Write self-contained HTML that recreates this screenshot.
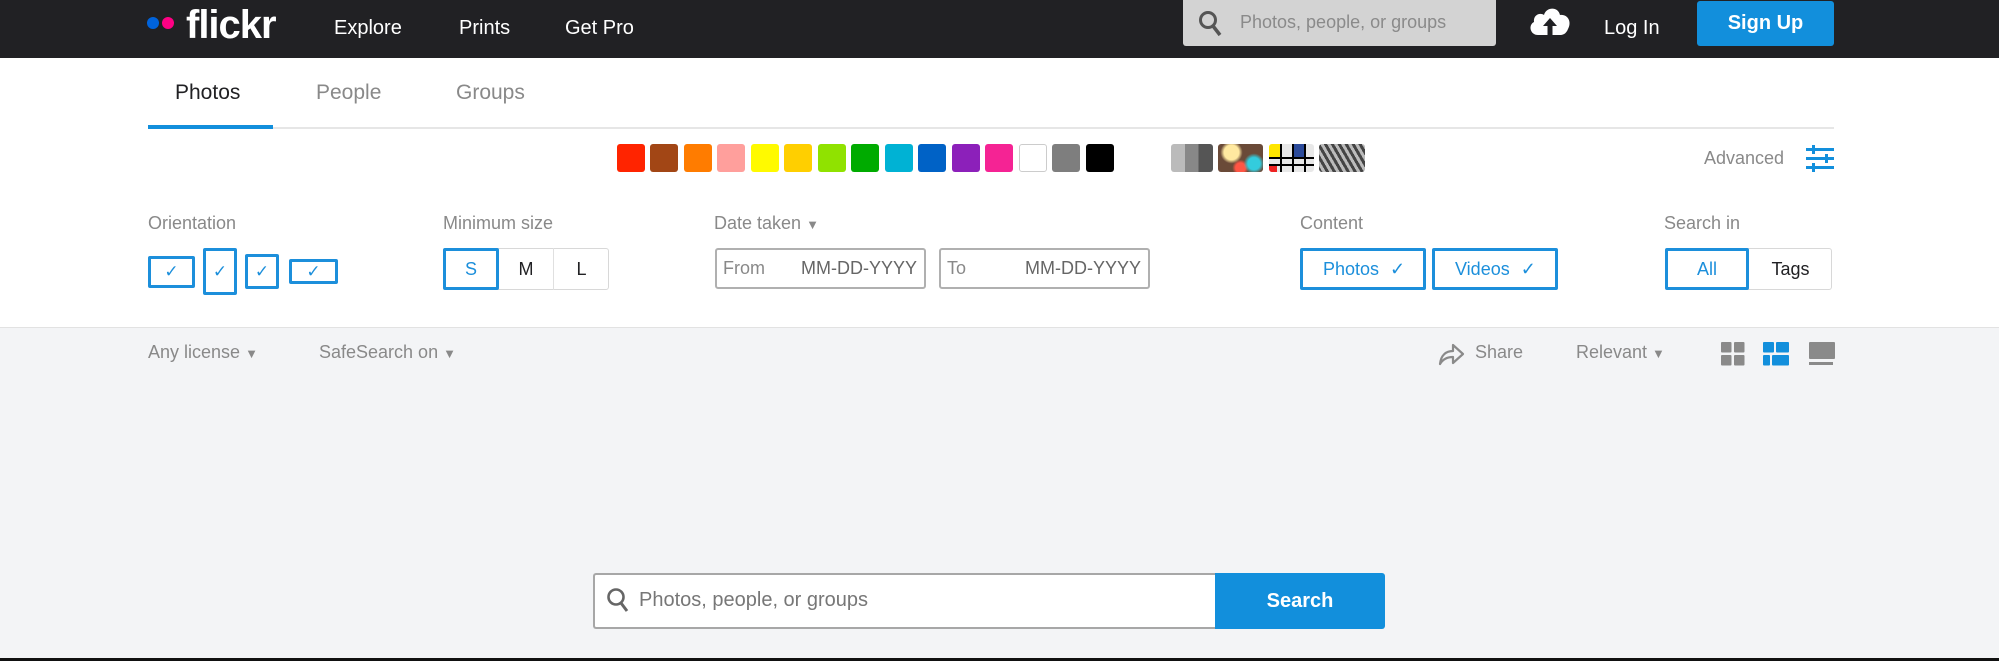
<!DOCTYPE html>
<html><head><meta charset="utf-8"><style>
*{margin:0;padding:0;box-sizing:border-box}
body{width:1999px;height:661px;overflow:hidden;background:#f3f4f6;font-family:"Liberation Sans",sans-serif;position:relative}
.a{position:absolute}
.nav{left:0;top:0;width:1999px;height:58px;background:#212124}
.white{left:0;top:58px;width:1999px;height:270px;background:#fff;border-bottom:1px solid #e2e2e2}
.nl{color:#fff;font-size:20px;top:17px}
.sw{top:144px;width:28px;height:28px;border-radius:3px}
.lbl{color:#898989;font-size:18px;top:213px}
.bx{border:3px solid #1c8fdb;border-radius:2px}
.ck{color:#1c8fdb;font-size:17px;display:flex;align-items:center;justify-content:center}
.seg{border:1px solid #d8d8d8;font-size:18px;display:flex;align-items:center;justify-content:center;color:#212124}
.gray{color:#898989;font-size:18px;top:342px}
</style></head><body>
<div class="a nav"></div>
<div class="a" style="left:147px;top:17px;width:12px;height:12px;border-radius:50%;background:#0063dc"></div>
<div class="a" style="left:162px;top:17px;width:12px;height:12px;border-radius:50%;background:#ff0084"></div>
<div class="a" style="left:186px;top:2px;color:#fff;font-size:40px;font-weight:bold;letter-spacing:-1px;line-height:46px">flickr</div>
<div class="a nl" style="left:334px">Explore</div>
<div class="a nl" style="left:459px">Prints</div>
<div class="a nl" style="left:565px">Get Pro</div>
<div class="a" style="left:1183px;top:0;width:313px;height:46px;background:#d3d3d3;border-radius:0 0 3px 3px"></div>
<svg class="a" style="left:1198px;top:10px" width="26" height="28" viewBox="0 0 26 28"><circle cx="10" cy="10" r="7.5" fill="none" stroke="#555" stroke-width="3"/><line x1="15" y1="16" x2="22" y2="25" stroke="#555" stroke-width="3.5"/></svg>
<div class="a" style="left:1240px;top:12px;color:#8a8a8a;font-size:18px">Photos, people, or groups</div>
<svg class="a" style="left:1528px;top:5px" width="44" height="32" viewBox="0 0 44 32"><path d="M10 30 C2 30 0 20 6 17 C5 10 12 7 16 10 C18 2 30 1 32 10 C40 9 44 17 40 24 C38 29 35 30 32 30 Z" fill="#fff"/><path d="M22 13 L15 21 H19.5 V30 H24.5 V21 H29 Z" fill="#212124"/></svg>
<div class="a nl" style="left:1604px">Log In</div>
<div class="a" style="left:1697px;top:1px;width:137px;height:45px;background:#128fdc;border-radius:3px;color:#fff;font-size:20px;font-weight:bold;text-align:center;line-height:45px">Sign Up</div>

<div class="a white"></div>
<div class="a" style="left:175px;top:81px;font-size:21px;color:#212124">Photos</div>
<div class="a" style="left:316px;top:81px;font-size:21px;color:#898989">People</div>
<div class="a" style="left:456px;top:81px;font-size:21px;color:#898989">Groups</div>
<div class="a" style="left:148px;top:127px;width:1686px;height:2px;background:#e6e6e6"></div>
<div class="a" style="left:148px;top:125px;width:125px;height:4px;background:#128fdc"></div>

<div class="a sw" style="left:617px;background:#ff2400"></div>
<div class="a sw" style="left:650px;background:#a24615"></div>
<div class="a sw" style="left:684px;background:#ff7c00"></div>
<div class="a sw" style="left:717px;background:#ff9f9c"></div>
<div class="a sw" style="left:751px;background:#fffa00"></div>
<div class="a sw" style="left:784px;background:#ffcf00"></div>
<div class="a sw" style="left:818px;background:#90e200"></div>
<div class="a sw" style="left:851px;background:#00ab00"></div>
<div class="a sw" style="left:885px;background:#00b2d4"></div>
<div class="a sw" style="left:918px;background:#0062c6"></div>
<div class="a sw" style="left:952px;background:#8c20ba"></div>
<div class="a sw" style="left:985px;background:#f52394"></div>
<div class="a sw" style="left:1019px;background:#fff;border:1px solid #ccc"></div>
<div class="a sw" style="left:1052px;background:#7e7e7e"></div>
<div class="a sw" style="left:1086px;background:#000"></div>
<div class="a" style="left:1171px;top:144px;width:42px;height:28px;border-radius:3px;background:linear-gradient(90deg,#bbb 0 33%,#888 33% 66%,#555 66%)"></div>
<div class="a" style="left:1218px;top:144px;width:45px;height:28px;border-radius:3px;background:radial-gradient(circle at 30% 30%,#ffe9a0 0 20%,transparent 30%),radial-gradient(circle at 80% 70%,#3cd 0 15%,transparent 25%),radial-gradient(circle at 50% 85%,#f54 0 15%,transparent 25%),#6a4a38"></div>
<div class="a" style="left:1269px;top:144px;width:45px;height:28px;border-radius:3px;background:#e8e8e8;overflow:hidden"><svg width="45" height="28"><rect x="0" y="0" width="12" height="14" fill="#ffe600"/><rect x="24" y="0" width="12" height="14" fill="#2b4a9a"/><rect x="0" y="20" width="8" height="8" fill="#e22"/><g stroke="#000" stroke-width="2"><line x1="12" y1="0" x2="12" y2="28"/><line x1="24" y1="0" x2="24" y2="28"/><line x1="36" y1="0" x2="36" y2="28"/><line x1="0" y1="14" x2="45" y2="14"/><line x1="0" y1="21" x2="45" y2="21"/></g></svg></div>
<div class="a" style="left:1319px;top:144px;width:46px;height:28px;border-radius:3px;background:repeating-linear-gradient(60deg,#444 0 3px,#bbb 3px 6px)"></div>
<div class="a" style="left:1704px;top:148px;font-size:18px;color:#898989">Advanced</div>
<svg class="a" style="left:1806px;top:144px" width="28" height="28" viewBox="0 0 28 28"><g fill="#128fdc"><rect x="0" y="4" width="28" height="3"/><rect x="0" y="13" width="28" height="3"/><rect x="0" y="22" width="28" height="3"/><rect x="6" y="1" width="3" height="9"/><rect x="19" y="10" width="3" height="9"/><rect x="6" y="19" width="3" height="9"/></g></svg>

<div class="a lbl" style="left:148px">Orientation</div>
<div class="a lbl" style="left:443px">Minimum size</div>
<div class="a lbl" style="left:714px">Date taken <span style="font-size:13px">▼</span></div>
<div class="a lbl" style="left:1300px">Content</div>
<div class="a lbl" style="left:1664px">Search in</div>

<div class="a bx ck" style="left:148px;top:256px;width:47px;height:32px">✓</div>
<div class="a bx ck" style="left:203px;top:248px;width:34px;height:47px">✓</div>
<div class="a bx ck" style="left:245px;top:254px;width:34px;height:35px">✓</div>
<div class="a bx ck" style="left:289px;top:259px;width:49px;height:25px">✓</div>

<div class="a seg" style="left:443px;top:248px;width:166px;height:42px;border-radius:3px"></div>
<div class="a bx" style="left:443px;top:248px;width:56px;height:42px;color:#1c8fdb;font-size:18px;display:flex;align-items:center;justify-content:center">S</div>
<div class="a" style="left:499px;top:248px;width:55px;height:42px;font-size:18px;display:flex;align-items:center;justify-content:center;color:#212124;border-right:1px solid #e0e0e0">M</div>
<div class="a" style="left:554px;top:248px;width:55px;height:42px;font-size:18px;display:flex;align-items:center;justify-content:center;color:#212124">L</div>

<div class="a" style="left:715px;top:248px;width:211px;height:41px;border:2px solid #b0b0b0;border-radius:3px;font-size:18px;color:#898989;line-height:37px;padding-left:6px">From<span style="position:absolute;left:84px;color:#666">MM-DD-YYYY</span></div>
<div class="a" style="left:939px;top:248px;width:211px;height:41px;border:2px solid #b0b0b0;border-radius:3px;font-size:18px;color:#898989;line-height:37px;padding-left:6px">To<span style="position:absolute;left:84px;color:#666">MM-DD-YYYY</span></div>

<div class="a bx" style="left:1300px;top:248px;width:126px;height:42px;color:#1c8fdb;font-size:18px;line-height:36px;padding-left:20px">Photos <span style="margin-left:6px">✓</span></div>
<div class="a bx" style="left:1432px;top:248px;width:126px;height:42px;color:#1c8fdb;font-size:18px;line-height:36px;padding-left:20px">Videos <span style="margin-left:6px">✓</span></div>

<div class="a seg" style="left:1665px;top:248px;width:167px;height:42px;border-radius:3px"></div>
<div class="a bx" style="left:1665px;top:248px;width:84px;height:42px;color:#1c8fdb;font-size:18px;display:flex;align-items:center;justify-content:center">All</div>
<div class="a" style="left:1749px;top:248px;width:83px;height:42px;font-size:18px;display:flex;align-items:center;justify-content:center;color:#212124">Tags</div>

<div class="a gray" style="left:148px">Any license <span style="font-size:13px">▼</span></div>
<div class="a gray" style="left:319px">SafeSearch on <span style="font-size:13px">▼</span></div>
<svg class="a" style="left:1437px;top:341px" width="28" height="26" viewBox="0 0 28 26"><path d="M3 23 C4 14 9 10 16 10 V4 L26 13 L16 22 V16 C10 16 6 18 3 23 Z" fill="none" stroke="#8a8a8a" stroke-width="2.2" stroke-linejoin="round"/></svg>
<div class="a gray" style="left:1475px">Share</div>
<div class="a gray" style="left:1576px">Relevant <span style="font-size:13px">▼</span></div>
<svg class="a" style="left:1721px;top:342px" width="24" height="24"><g fill="#8a8a8a"><rect x="0" y="0" width="10.5" height="10.5" rx="1"/><rect x="13" y="0" width="10.5" height="10.5" rx="1"/><rect x="0" y="13" width="10.5" height="10.5" rx="1"/><rect x="13" y="13" width="10.5" height="10.5" rx="1"/></g></svg>
<svg class="a" style="left:1763px;top:342px" width="26" height="24"><g fill="#128fdc"><rect x="0" y="0" width="11" height="10.5" rx="1"/><rect x="13" y="0" width="13" height="10.5" rx="1"/><rect x="0" y="13" width="7" height="10.5" rx="1"/><rect x="9" y="13" width="17" height="10.5" rx="1"/></g></svg>
<svg class="a" style="left:1809px;top:342px" width="26" height="24"><g fill="#8a8a8a"><rect x="0" y="0" width="26" height="17" rx="1"/><rect x="0" y="20" width="24" height="3"/></g></svg>

<div class="a" style="left:593px;top:573px;width:623px;height:56px;background:#fff;border:2px solid #a7a7a7;border-right:none;border-radius:3px 0 0 3px"></div>
<svg class="a" style="left:606px;top:587px" width="26" height="28" viewBox="0 0 26 28"><circle cx="10" cy="10" r="7.5" fill="none" stroke="#666" stroke-width="2.6"/><line x1="15" y1="16" x2="21" y2="24" stroke="#666" stroke-width="3"/></svg>
<div class="a" style="left:639px;top:589px;font-size:20px;color:#777">Photos, people, or groups</div>
<div class="a" style="left:1215px;top:573px;width:170px;height:56px;background:#128fdc;border-radius:0 3px 3px 0;color:#fff;font-size:20px;font-weight:bold;text-align:center;line-height:56px">Search</div>
<div class="a" style="left:0;top:658px;width:1999px;height:3px;background:#111"></div>
</body></html>
